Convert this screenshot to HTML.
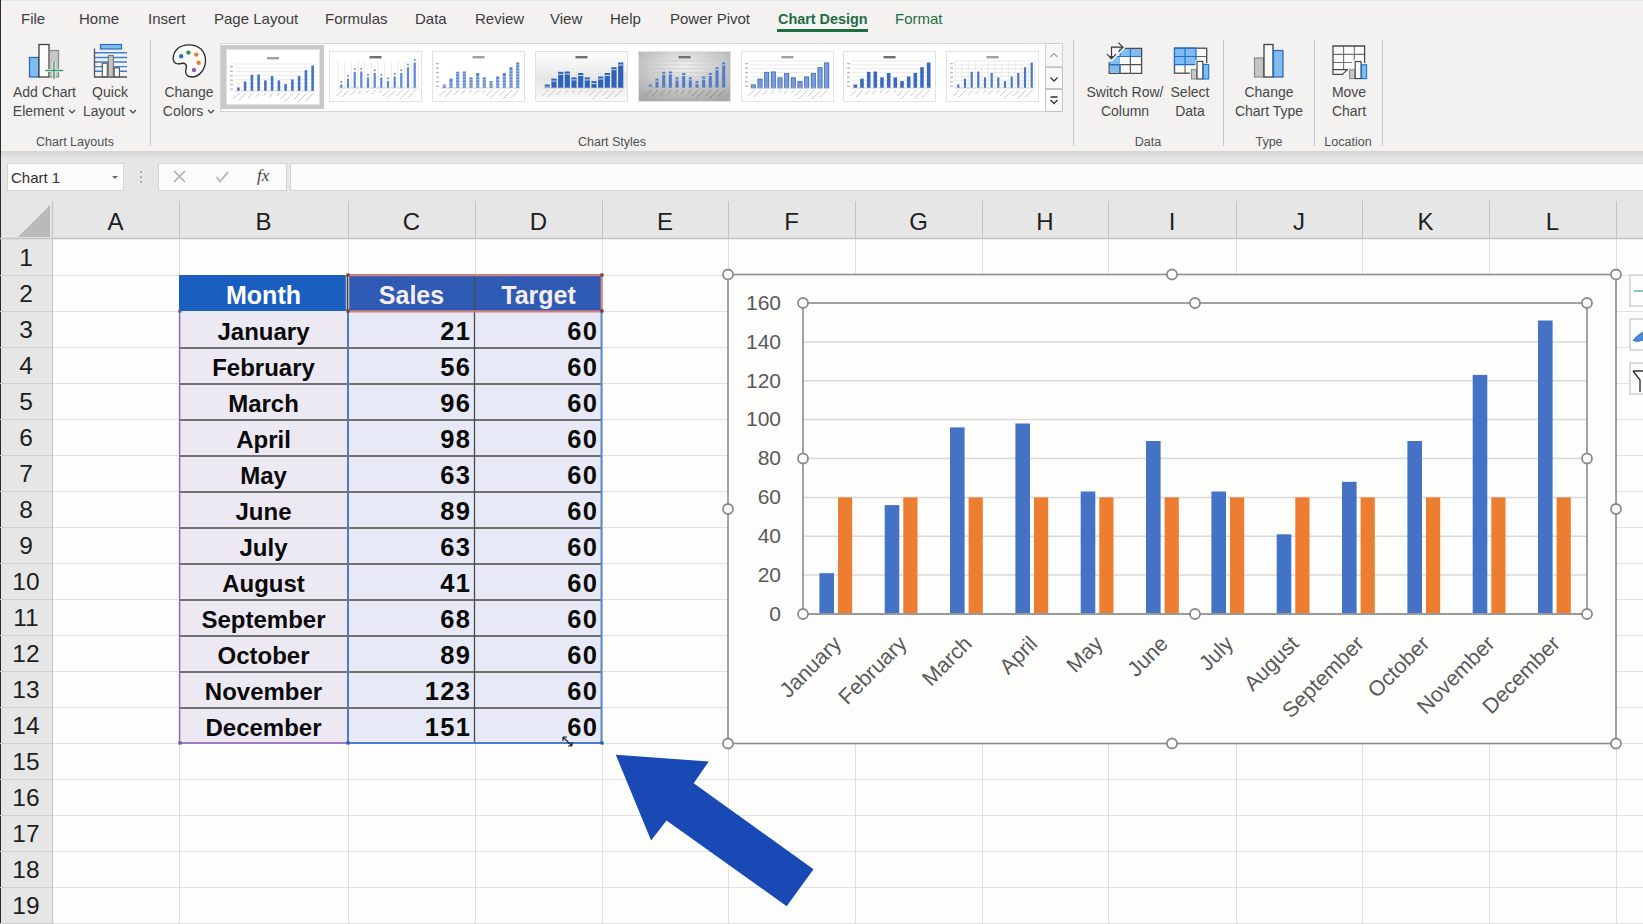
<!DOCTYPE html>
<html><head><meta charset="utf-8">
<style>
*{margin:0;padding:0;box-sizing:border-box}
html,body{width:1643px;height:924px;overflow:hidden;background:#fdfdfc;font-family:"Liberation Sans",sans-serif}
.abs{position:absolute}
.tab{position:absolute;top:10px;font-size:15px;color:#3c3c3c;white-space:nowrap;line-height:18px}
.btxt{position:absolute;font-size:14px;color:#474747;white-space:nowrap;line-height:19px;text-align:center}
.glbl{position:absolute;top:134px;font-size:12.5px;color:#505050;white-space:nowrap;line-height:17px;text-align:center}
.sep{position:absolute;top:40px;width:1px;height:106px;background:#c8c8c8}
.rh{position:absolute;left:0;width:52px;text-align:center;font-size:24.5px;color:#1e1e1e;line-height:38.2px}
.ch{position:absolute;top:201px;height:38px;text-align:center;font-size:24px;color:#1e1e1e;line-height:42px}
.cell{position:absolute;height:36px;line-height:41px;font-weight:bold;color:#0a0a0a;white-space:nowrap}
</style></head><body>

<div class="abs" style="left:0;top:0;width:1643px;height:151px;background:#f3f2f1"></div>
<div class="abs" style="left:0;top:0;width:1643px;height:1px;background:#dfe9e3"></div>
<div class="abs" style="left:0;top:151px;width:1643px;height:7px;background:linear-gradient(#d4d4d4,#e4e4e4)"></div>
<div class="tab" style="left:21px;color:#3c3c3c">File</div>
<div class="tab" style="left:79px;color:#3c3c3c">Home</div>
<div class="tab" style="left:148px;color:#3c3c3c">Insert</div>
<div class="tab" style="left:214px;color:#3c3c3c">Page Layout</div>
<div class="tab" style="left:325px;color:#3c3c3c">Formulas</div>
<div class="tab" style="left:415px;color:#3c3c3c">Data</div>
<div class="tab" style="left:475px;color:#3c3c3c">Review</div>
<div class="tab" style="left:550px;color:#3c3c3c">View</div>
<div class="tab" style="left:610px;color:#3c3c3c">Help</div>
<div class="tab" style="left:670px;color:#3c3c3c">Power Pivot</div>
<div class="tab" style="left:778px;color:#1e6e42;font-weight:bold;font-size:14.4px;top:10px">Chart Design</div>
<div class="tab" style="left:895px;color:#1e6e42">Format</div>
<div class="abs" style="left:777px;top:29px;width:91px;height:3px;background:#1e6e42"></div>
<div class="sep" style="left:150px"></div>
<div class="sep" style="left:1073px"></div>
<div class="sep" style="left:1223px"></div>
<div class="sep" style="left:1314px"></div>
<div class="sep" style="left:1382px"></div>
<div class="btxt" style="left:-15.5px;top:83px;width:120px">Add Chart</div>
<div class="btxt" style="left:-15.5px;top:102px;width:120px">Element<svg width="8" height="5" style="margin-left:4px;vertical-align:2px"><path d="M1 1 L4 4 L7 1" fill="none" stroke="#444" stroke-width="1.2"/></svg></div>
<div class="btxt" style="left:50.0px;top:83px;width:120px">Quick</div>
<div class="btxt" style="left:50.0px;top:102px;width:120px">Layout<svg width="8" height="5" style="margin-left:4px;vertical-align:2px"><path d="M1 1 L4 4 L7 1" fill="none" stroke="#444" stroke-width="1.2"/></svg></div>
<div class="btxt" style="left:129.0px;top:83px;width:120px">Change</div>
<div class="btxt" style="left:129.0px;top:102px;width:120px">Colors<svg width="8" height="5" style="margin-left:4px;vertical-align:2px"><path d="M1 1 L4 4 L7 1" fill="none" stroke="#444" stroke-width="1.2"/></svg></div>
<div class="btxt" style="left:1065.0px;top:83px;width:120px">Switch Row/</div>
<div class="btxt" style="left:1065.0px;top:102px;width:120px">Column</div>
<div class="btxt" style="left:1130.0px;top:83px;width:120px">Select</div>
<div class="btxt" style="left:1130.0px;top:102px;width:120px">Data</div>
<div class="btxt" style="left:1209.0px;top:83px;width:120px">Change</div>
<div class="btxt" style="left:1209.0px;top:102px;width:120px">Chart Type</div>
<div class="btxt" style="left:1289.0px;top:83px;width:120px">Move</div>
<div class="btxt" style="left:1289.0px;top:102px;width:120px">Chart</div>
<div class="glbl" style="left:5.0px;width:140px">Chart Layouts</div>
<div class="glbl" style="left:542.0px;width:140px">Chart Styles</div>
<div class="glbl" style="left:1078.0px;width:140px">Data</div>
<div class="glbl" style="left:1199.0px;width:140px">Type</div>
<div class="glbl" style="left:1278.0px;width:140px">Location</div>
<svg class="abs" style="left:0;top:0" width="1643" height="151">
<!-- add chart element -->
<rect x="29.5" y="57.5" width="9.5" height="19.5" fill="#80bdee" stroke="#2a6cc0" stroke-width="1.3"/>
<rect x="39" y="44.5" width="10" height="32.5" fill="#fbfbfb" stroke="#404040" stroke-width="1.3"/>
<rect x="49.5" y="50.5" width="9" height="26.5" fill="#c6c6c6" stroke="#8a8a8a" stroke-width="1.2"/>
<path d="M45.5 70.5 H63 M54 61.5 V79" stroke="#f3f2f1" stroke-width="3.2" fill="none"/><path d="M45.5 70.5 H63 M54 61.5 V79" stroke="#3d9a68" stroke-width="1.4" fill="none"/>
<!-- quick layout -->
<rect x="100.5" y="44.5" width="21" height="4.5" fill="#80bdee" stroke="#2a6cc0" stroke-width="1.2"/>
<g stroke="#3d7fd6" stroke-width="1.4">
<path d="M95 52.8 H127 M95 57.5 H127 M95 62 H127 M95 66.6 H127 M95 71.2 H127"/>
</g>
<path d="M94.5 48.5 V77 H127" fill="none" stroke="#505050" stroke-width="1.3"/>
<rect x="102.3" y="63.2" width="5" height="13.5" fill="#fbfbfb" stroke="#505050" stroke-width="1.1"/>
<rect x="108.3" y="55.6" width="5" height="21" fill="#c3c3c3" stroke="#777" stroke-width="1.1"/>
<rect x="114.2" y="67.8" width="5.2" height="9" fill="#fbfbfb" stroke="#505050" stroke-width="1.1"/>
<!-- palette -->
<path d="M189 44.8 C178 44.8 173.2 52 173.2 58.5 C173.2 63.5 177 64.5 181 63.5 C185 62.5 187.5 64.5 186 69 C184.5 73.5 187 77 191.5 77 C200 77 205.5 68.5 205.5 60.5 C205.5 51 198.5 44.8 189 44.8 Z" fill="#fbfbfb" stroke="#2b2b2b" stroke-width="1.3"/>
<circle cx="181.2" cy="56.2" r="2.2" fill="#2f6ed0"/>
<circle cx="188.4" cy="52.6" r="2.2" fill="#3e8e52"/>
<circle cx="196.3" cy="54.6" r="2.2" fill="#ea7a35"/>
<circle cx="198.6" cy="62.8" r="2.2" fill="#ea7a35"/>
<circle cx="194" cy="70" r="2.2" fill="#8060b8"/>
<!-- switch row/column -->
<rect x="1109.2" y="48.5" width="32.4" height="24.8" fill="#fbfbfb"/><path d="M1123.5 48.5 H1141.6 V73.3 H1109.2 V62" fill="none" stroke="#4a4a4a" stroke-width="1.3"/>
<rect x="1120" y="49.1" width="21" height="7.4" fill="#80bdee"/>
<rect x="1109.8" y="56.5" width="10.2" height="16.2" fill="#80bdee"/>
<path d="M1109.2 64.6 H1141.6 M1120 56.5 H1141.6 M1130.4 56.5 V73.3 M1120 64.6 V73.3" stroke="#505050" stroke-width="1.1" fill="none"/>
<path d="M1109.2 56.5 H1120 V48.5 M1109.2 64.6 H1120 V73.3 M1130.4 48.5 V56.5 M1120 56.5 H1141.6" stroke="#1f6fd0" stroke-width="1.1" fill="none"/>
<path d="M1124.5 47 L1110.5 61" stroke="#f3f2f1" stroke-width="2.5"/>
<path d="M1111.5 58.5 V47.2 H1122.8 M1118.4 42.6 L1123 47.2 L1118.4 51.8 M1107 54.2 L1111.5 58.7 L1116 54.2" stroke="#333" stroke-width="1.2" fill="none"/>
<!-- select data -->
<rect x="1174.5" y="48.2" width="32.2" height="25" fill="#fbfbfb" stroke="#4a4a4a" stroke-width="1.3"/>
<rect x="1175" y="48.7" width="21" height="15.9" fill="#80bdee"/>
<path d="M1196 56.5 H1206.7 M1185 64.6 V73.2" stroke="#606060" stroke-width="1.1" fill="none"/>
<path d="M1174.5 48.2 H1196 V64.6 H1174.5 Z M1174.5 56.5 H1196 M1185 48.2 V64.6" stroke="#1f6fd0" stroke-width="1.2" fill="none"/>
<path d="M1191 80 V69 H1196.5 V61 H1203 V64 H1209.5 V80 Z" fill="#f3f2f1" stroke="#f3f2f1" stroke-width="2.2"/>
<rect x="1191.5" y="69.6" width="5.2" height="9.4" fill="#c8c8c8" stroke="#888" stroke-width="1"/>
<rect x="1197" y="61.4" width="5.8" height="17.6" fill="#fbfbfb" stroke="#404040" stroke-width="1.1"/>
<rect x="1203.3" y="64.4" width="5.4" height="14.6" fill="#80bdee" stroke="#1f6fd0" stroke-width="1.1"/>
<!-- change chart type -->
<rect x="1254.5" y="58" width="9" height="19" fill="#c6c6c6" stroke="#8a8a8a" stroke-width="1.2"/>
<rect x="1264" y="44.5" width="9" height="32.5" fill="#fbfbfb" stroke="#404040" stroke-width="1.3"/>
<rect x="1273.5" y="50.5" width="9.5" height="26.5" fill="#80bdee" stroke="#2a6cc0" stroke-width="1.3"/>
<!-- move chart -->
<rect x="1333" y="46" width="31.6" height="28" fill="#fbfbfb"/>
<path d="M1343.6 46 V69.6 M1354.3 46 V62.5 M1333 54.4 H1364.6 M1333 62.5 H1352" stroke="#707070" stroke-width="1.1" fill="none"/>
<path d="M1349 69.6 H1333 V46 H1364.6 V63" fill="none" stroke="#4a4a4a" stroke-width="1.3"/>
<path d="M1333 69.6 H1347.5 L1342.3 74.4 H1333 Z" fill="#fbfbfb" stroke="#4a4a4a" stroke-width="1.2"/>
<path d="M1349 80 V69 H1354.6 V61 H1361.6 V64.2 H1367.5 V80 Z" fill="#f3f2f1" stroke="#f3f2f1" stroke-width="2"/>
<rect x="1349.6" y="69.8" width="5.2" height="8.8" fill="#c8c8c8" stroke="#888" stroke-width="1"/>
<rect x="1355.2" y="61.6" width="5.8" height="17" fill="#fbfbfb" stroke="#404040" stroke-width="1.1"/>
<rect x="1361.6" y="64.8" width="5" height="13.8" fill="#80bdee" stroke="#1f6fd0" stroke-width="1.1"/>
</svg>
<div class="abs" style="left:220px;top:43px;width:826px;height:69px;background:#ffffff;border:1px solid #d6d6d6"></div>
<div class="abs" style="left:221px;top:45px;width:103px;height:64px;background:#c9c9c9"></div>
<div class="abs" style="left:1045px;top:43px;width:18px;height:24px;background:#f7f7f7;border:1px solid #d0d0d0"></div>
<div class="abs" style="left:1045px;top:67px;width:18px;height:22px;background:#fafafa;border:1px solid #c4c4c4"></div>
<div class="abs" style="left:1045px;top:89px;width:18px;height:23px;background:#fafafa;border:1px solid #c4c4c4"></div>
<svg class="abs" style="left:1045px;top:43px" width="18" height="69">
<path d="M5.5 14 L9 10.5 L12.5 14" fill="none" stroke="#a0a0a0" stroke-width="1.1"/>
<path d="M5.5 34.5 L9 38 L12.5 34.5" fill="none" stroke="#333" stroke-width="1.3"/>
<path d="M5.5 54 H12.5 M5.5 57 L9 60.5 L12.5 57" fill="none" stroke="#333" stroke-width="1.3"/>
</svg>
<svg class="abs" style="left:226px;top:49px" width="94" height="56"><rect x="0.5" y="0.5" width="93" height="55" fill="#ffffff" stroke="#e2e2e2"/><rect x="41.0" y="8.0" width="12" height="2.4" fill="#a0a0a0"/><line x1="9" y1="15.0" x2="90" y2="15.0" stroke="#dcdcdc" stroke-width="0.6"/><line x1="9" y1="18.9" x2="90" y2="18.9" stroke="#dcdcdc" stroke-width="0.6"/><line x1="9" y1="22.7" x2="90" y2="22.7" stroke="#dcdcdc" stroke-width="0.6"/><line x1="9" y1="26.6" x2="90" y2="26.6" stroke="#dcdcdc" stroke-width="0.6"/><line x1="9" y1="30.4" x2="90" y2="30.4" stroke="#dcdcdc" stroke-width="0.6"/><line x1="9" y1="34.3" x2="90" y2="34.3" stroke="#dcdcdc" stroke-width="0.6"/><line x1="9" y1="38.1" x2="90" y2="38.1" stroke="#dcdcdc" stroke-width="0.6"/><rect x="4" y="17.0" width="3" height="1.3" fill="#b8b8b8"/><rect x="4" y="21.5" width="3" height="1.3" fill="#b8b8b8"/><rect x="4" y="26.0" width="3" height="1.3" fill="#b8b8b8"/><rect x="4" y="30.5" width="3" height="1.3" fill="#b8b8b8"/><rect x="4" y="35.0" width="3" height="1.3" fill="#b8b8b8"/><rect x="4" y="39.5" width="3" height="1.3" fill="#b8b8b8"/><rect x="11.1" y="38.5" width="2.6" height="3.5" fill="#4472c4"/><rect x="17.8" y="32.5" width="2.6" height="9.4" fill="#4472c4"/><rect x="24.6" y="25.8" width="2.6" height="16.2" fill="#4472c4"/><rect x="31.3" y="25.5" width="2.6" height="16.5" fill="#4472c4"/><rect x="38.1" y="31.4" width="2.6" height="10.6" fill="#4472c4"/><rect x="44.8" y="27.0" width="2.6" height="15.0" fill="#4472c4"/><rect x="51.6" y="31.4" width="2.6" height="10.6" fill="#4472c4"/><rect x="58.3" y="35.1" width="2.6" height="6.9" fill="#4472c4"/><rect x="65.1" y="30.5" width="2.6" height="11.5" fill="#4472c4"/><rect x="71.8" y="27.0" width="2.6" height="15.0" fill="#4472c4"/><rect x="78.6" y="21.2" width="2.6" height="20.8" fill="#4472c4"/><rect x="85.3" y="16.5" width="2.6" height="25.5" fill="#4472c4"/><line x1="9" y1="42" x2="90" y2="42" stroke="#c0c0c0" stroke-width="0.7"/><line x1="13.4" y1="44" x2="7.4" y2="50" stroke="#c0c0c0" stroke-width="0.9"/><line x1="20.1" y1="44" x2="13.1" y2="51" stroke="#c0c0c0" stroke-width="0.9"/><line x1="26.9" y1="44" x2="21.9" y2="49" stroke="#c0c0c0" stroke-width="0.9"/><line x1="33.6" y1="44" x2="29.6" y2="48" stroke="#c0c0c0" stroke-width="0.9"/><line x1="40.4" y1="44" x2="37.4" y2="47" stroke="#c0c0c0" stroke-width="0.9"/><line x1="47.1" y1="44" x2="43.1" y2="48" stroke="#c0c0c0" stroke-width="0.9"/><line x1="53.9" y1="44" x2="50.9" y2="47" stroke="#c0c0c0" stroke-width="0.9"/><line x1="60.6" y1="44" x2="54.6" y2="50" stroke="#c0c0c0" stroke-width="0.9"/><line x1="67.4" y1="44" x2="58.4" y2="53" stroke="#c0c0c0" stroke-width="0.9"/><line x1="74.1" y1="44" x2="68.1" y2="50" stroke="#c0c0c0" stroke-width="0.9"/><line x1="80.9" y1="44" x2="71.9" y2="53" stroke="#c0c0c0" stroke-width="0.9"/><line x1="87.6" y1="44" x2="79.6" y2="52" stroke="#c0c0c0" stroke-width="0.9"/></svg>
<svg class="abs" style="left:329px;top:51px" width="93" height="51"><rect x="0.5" y="0.5" width="92" height="50" fill="#ffffff" stroke="#e2e2e2"/><rect x="40.5" y="5.0" width="12" height="2.4" fill="#707070"/><line x1="9.0" y1="10" x2="9.0" y2="37" stroke="#dddddd" stroke-width="0.6"/><line x1="15.7" y1="10" x2="15.7" y2="37" stroke="#dddddd" stroke-width="0.6"/><line x1="22.3" y1="10" x2="22.3" y2="37" stroke="#dddddd" stroke-width="0.6"/><line x1="29.0" y1="10" x2="29.0" y2="37" stroke="#dddddd" stroke-width="0.6"/><line x1="35.7" y1="10" x2="35.7" y2="37" stroke="#dddddd" stroke-width="0.6"/><line x1="42.3" y1="10" x2="42.3" y2="37" stroke="#dddddd" stroke-width="0.6"/><line x1="49.0" y1="10" x2="49.0" y2="37" stroke="#dddddd" stroke-width="0.6"/><line x1="55.7" y1="10" x2="55.7" y2="37" stroke="#dddddd" stroke-width="0.6"/><line x1="62.3" y1="10" x2="62.3" y2="37" stroke="#dddddd" stroke-width="0.6"/><line x1="69.0" y1="10" x2="69.0" y2="37" stroke="#dddddd" stroke-width="0.6"/><line x1="75.7" y1="10" x2="75.7" y2="37" stroke="#dddddd" stroke-width="0.6"/><line x1="82.3" y1="10" x2="82.3" y2="37" stroke="#dddddd" stroke-width="0.6"/><line x1="89.0" y1="10" x2="89.0" y2="37" stroke="#dddddd" stroke-width="0.6"/><rect x="11.2" y="33.5" width="2.2" height="3.5" fill="#5b87d4"/><rect x="11.5" y="30.0" width="1.6" height="1.6" fill="#777"/><rect x="17.9" y="27.6" width="2.2" height="9.4" fill="#5b87d4"/><rect x="18.2" y="24.1" width="1.6" height="1.6" fill="#777"/><rect x="24.6" y="20.8" width="2.2" height="16.2" fill="#5b87d4"/><rect x="24.9" y="17.3" width="1.6" height="1.6" fill="#777"/><rect x="31.2" y="20.5" width="2.2" height="16.5" fill="#5b87d4"/><rect x="31.5" y="17.0" width="1.6" height="1.6" fill="#777"/><rect x="37.9" y="26.4" width="2.2" height="10.6" fill="#5b87d4"/><rect x="38.2" y="22.9" width="1.6" height="1.6" fill="#777"/><rect x="44.6" y="22.0" width="2.2" height="15.0" fill="#5b87d4"/><rect x="44.9" y="18.5" width="1.6" height="1.6" fill="#777"/><rect x="51.2" y="26.4" width="2.2" height="10.6" fill="#5b87d4"/><rect x="51.5" y="22.9" width="1.6" height="1.6" fill="#777"/><rect x="57.9" y="30.1" width="2.2" height="6.9" fill="#5b87d4"/><rect x="58.2" y="26.6" width="1.6" height="1.6" fill="#777"/><rect x="64.6" y="25.5" width="2.2" height="11.5" fill="#5b87d4"/><rect x="64.9" y="22.0" width="1.6" height="1.6" fill="#777"/><rect x="71.2" y="22.0" width="2.2" height="15.0" fill="#5b87d4"/><rect x="71.5" y="18.5" width="1.6" height="1.6" fill="#777"/><rect x="77.9" y="16.2" width="2.2" height="20.8" fill="#5b87d4"/><rect x="78.2" y="12.7" width="1.6" height="1.6" fill="#777"/><rect x="84.6" y="11.5" width="2.2" height="25.5" fill="#5b87d4"/><rect x="84.9" y="8.0" width="1.6" height="1.6" fill="#777"/><line x1="9" y1="37" x2="89" y2="37" stroke="#c0c0c0" stroke-width="0.7"/><line x1="13.3" y1="39" x2="7.3" y2="45" stroke="#c0c0c0" stroke-width="0.9"/><line x1="20.0" y1="39" x2="13.0" y2="46" stroke="#c0c0c0" stroke-width="0.9"/><line x1="26.7" y1="39" x2="21.7" y2="44" stroke="#c0c0c0" stroke-width="0.9"/><line x1="33.3" y1="39" x2="29.3" y2="43" stroke="#c0c0c0" stroke-width="0.9"/><line x1="40.0" y1="39" x2="37.0" y2="42" stroke="#c0c0c0" stroke-width="0.9"/><line x1="46.7" y1="39" x2="42.7" y2="43" stroke="#c0c0c0" stroke-width="0.9"/><line x1="53.3" y1="39" x2="50.3" y2="42" stroke="#c0c0c0" stroke-width="0.9"/><line x1="60.0" y1="39" x2="54.0" y2="45" stroke="#c0c0c0" stroke-width="0.9"/><line x1="66.7" y1="39" x2="57.7" y2="48" stroke="#c0c0c0" stroke-width="0.9"/><line x1="73.3" y1="39" x2="67.3" y2="45" stroke="#c0c0c0" stroke-width="0.9"/><line x1="80.0" y1="39" x2="71.0" y2="48" stroke="#c0c0c0" stroke-width="0.9"/><line x1="86.7" y1="39" x2="78.7" y2="47" stroke="#c0c0c0" stroke-width="0.9"/></svg>
<svg class="abs" style="left:432px;top:51px" width="93" height="51"><rect x="0.5" y="0.5" width="92" height="50" fill="#ffffff" stroke="#e2e2e2"/><rect x="40.5" y="5.0" width="12" height="2.4" fill="#a0a0a0"/><rect x="4" y="12.0" width="3" height="1.3" fill="#b8b8b8"/><rect x="4" y="16.5" width="3" height="1.3" fill="#b8b8b8"/><rect x="4" y="21.0" width="3" height="1.3" fill="#b8b8b8"/><rect x="4" y="25.5" width="3" height="1.3" fill="#b8b8b8"/><rect x="4" y="30.0" width="3" height="1.3" fill="#b8b8b8"/><rect x="4" y="34.5" width="3" height="1.3" fill="#b8b8b8"/><rect x="10.7" y="33.5" width="3.2" height="3.5" fill="#5a86d0"/><rect x="10.7" y="34.5" width="3.2" height="0.8" fill="#ffffff" opacity="0.7"/><rect x="17.4" y="27.6" width="3.2" height="9.4" fill="#5a86d0"/><rect x="17.4" y="34.5" width="3.2" height="0.8" fill="#ffffff" opacity="0.7"/><rect x="17.4" y="31.5" width="3.2" height="0.8" fill="#ffffff" opacity="0.7"/><rect x="24.1" y="20.8" width="3.2" height="16.2" fill="#5a86d0"/><rect x="24.1" y="34.5" width="3.2" height="0.8" fill="#ffffff" opacity="0.7"/><rect x="24.1" y="31.5" width="3.2" height="0.8" fill="#ffffff" opacity="0.7"/><rect x="24.1" y="28.5" width="3.2" height="0.8" fill="#ffffff" opacity="0.7"/><rect x="24.1" y="25.5" width="3.2" height="0.8" fill="#ffffff" opacity="0.7"/><rect x="24.1" y="22.5" width="3.2" height="0.8" fill="#ffffff" opacity="0.7"/><rect x="30.7" y="20.5" width="3.2" height="16.5" fill="#5a86d0"/><rect x="30.7" y="34.5" width="3.2" height="0.8" fill="#ffffff" opacity="0.7"/><rect x="30.7" y="31.5" width="3.2" height="0.8" fill="#ffffff" opacity="0.7"/><rect x="30.7" y="28.5" width="3.2" height="0.8" fill="#ffffff" opacity="0.7"/><rect x="30.7" y="25.5" width="3.2" height="0.8" fill="#ffffff" opacity="0.7"/><rect x="30.7" y="22.5" width="3.2" height="0.8" fill="#ffffff" opacity="0.7"/><rect x="37.4" y="26.4" width="3.2" height="10.6" fill="#5a86d0"/><rect x="37.4" y="34.5" width="3.2" height="0.8" fill="#ffffff" opacity="0.7"/><rect x="37.4" y="31.5" width="3.2" height="0.8" fill="#ffffff" opacity="0.7"/><rect x="37.4" y="28.5" width="3.2" height="0.8" fill="#ffffff" opacity="0.7"/><rect x="44.1" y="22.0" width="3.2" height="15.0" fill="#5a86d0"/><rect x="44.1" y="34.5" width="3.2" height="0.8" fill="#ffffff" opacity="0.7"/><rect x="44.1" y="31.5" width="3.2" height="0.8" fill="#ffffff" opacity="0.7"/><rect x="44.1" y="28.5" width="3.2" height="0.8" fill="#ffffff" opacity="0.7"/><rect x="44.1" y="25.5" width="3.2" height="0.8" fill="#ffffff" opacity="0.7"/><rect x="50.7" y="26.4" width="3.2" height="10.6" fill="#5a86d0"/><rect x="50.7" y="34.5" width="3.2" height="0.8" fill="#ffffff" opacity="0.7"/><rect x="50.7" y="31.5" width="3.2" height="0.8" fill="#ffffff" opacity="0.7"/><rect x="50.7" y="28.5" width="3.2" height="0.8" fill="#ffffff" opacity="0.7"/><rect x="57.4" y="30.1" width="3.2" height="6.9" fill="#5a86d0"/><rect x="57.4" y="34.5" width="3.2" height="0.8" fill="#ffffff" opacity="0.7"/><rect x="57.4" y="31.5" width="3.2" height="0.8" fill="#ffffff" opacity="0.7"/><rect x="64.1" y="25.5" width="3.2" height="11.5" fill="#5a86d0"/><rect x="64.1" y="34.5" width="3.2" height="0.8" fill="#ffffff" opacity="0.7"/><rect x="64.1" y="31.5" width="3.2" height="0.8" fill="#ffffff" opacity="0.7"/><rect x="64.1" y="28.5" width="3.2" height="0.8" fill="#ffffff" opacity="0.7"/><rect x="70.7" y="22.0" width="3.2" height="15.0" fill="#5a86d0"/><rect x="70.7" y="34.5" width="3.2" height="0.8" fill="#ffffff" opacity="0.7"/><rect x="70.7" y="31.5" width="3.2" height="0.8" fill="#ffffff" opacity="0.7"/><rect x="70.7" y="28.5" width="3.2" height="0.8" fill="#ffffff" opacity="0.7"/><rect x="70.7" y="25.5" width="3.2" height="0.8" fill="#ffffff" opacity="0.7"/><rect x="77.4" y="16.2" width="3.2" height="20.8" fill="#5a86d0"/><rect x="77.4" y="34.5" width="3.2" height="0.8" fill="#ffffff" opacity="0.7"/><rect x="77.4" y="31.5" width="3.2" height="0.8" fill="#ffffff" opacity="0.7"/><rect x="77.4" y="28.5" width="3.2" height="0.8" fill="#ffffff" opacity="0.7"/><rect x="77.4" y="25.5" width="3.2" height="0.8" fill="#ffffff" opacity="0.7"/><rect x="77.4" y="22.5" width="3.2" height="0.8" fill="#ffffff" opacity="0.7"/><rect x="77.4" y="19.5" width="3.2" height="0.8" fill="#ffffff" opacity="0.7"/><rect x="84.1" y="11.5" width="3.2" height="25.5" fill="#5a86d0"/><rect x="84.1" y="34.5" width="3.2" height="0.8" fill="#ffffff" opacity="0.7"/><rect x="84.1" y="31.5" width="3.2" height="0.8" fill="#ffffff" opacity="0.7"/><rect x="84.1" y="28.5" width="3.2" height="0.8" fill="#ffffff" opacity="0.7"/><rect x="84.1" y="25.5" width="3.2" height="0.8" fill="#ffffff" opacity="0.7"/><rect x="84.1" y="22.5" width="3.2" height="0.8" fill="#ffffff" opacity="0.7"/><rect x="84.1" y="19.5" width="3.2" height="0.8" fill="#ffffff" opacity="0.7"/><rect x="84.1" y="16.5" width="3.2" height="0.8" fill="#ffffff" opacity="0.7"/><rect x="84.1" y="13.5" width="3.2" height="0.8" fill="#ffffff" opacity="0.7"/><line x1="9" y1="37" x2="89" y2="37" stroke="#c0c0c0" stroke-width="0.7"/><line x1="13.3" y1="39" x2="7.3" y2="45" stroke="#c0c0c0" stroke-width="0.9"/><line x1="20.0" y1="39" x2="13.0" y2="46" stroke="#c0c0c0" stroke-width="0.9"/><line x1="26.7" y1="39" x2="21.7" y2="44" stroke="#c0c0c0" stroke-width="0.9"/><line x1="33.3" y1="39" x2="29.3" y2="43" stroke="#c0c0c0" stroke-width="0.9"/><line x1="40.0" y1="39" x2="37.0" y2="42" stroke="#c0c0c0" stroke-width="0.9"/><line x1="46.7" y1="39" x2="42.7" y2="43" stroke="#c0c0c0" stroke-width="0.9"/><line x1="53.3" y1="39" x2="50.3" y2="42" stroke="#c0c0c0" stroke-width="0.9"/><line x1="60.0" y1="39" x2="54.0" y2="45" stroke="#c0c0c0" stroke-width="0.9"/><line x1="66.7" y1="39" x2="57.7" y2="48" stroke="#c0c0c0" stroke-width="0.9"/><line x1="73.3" y1="39" x2="67.3" y2="45" stroke="#c0c0c0" stroke-width="0.9"/><line x1="80.0" y1="39" x2="71.0" y2="48" stroke="#c0c0c0" stroke-width="0.9"/><line x1="86.7" y1="39" x2="78.7" y2="47" stroke="#c0c0c0" stroke-width="0.9"/></svg>
<svg class="abs" style="left:535px;top:51px" width="93" height="51"><defs><linearGradient id="g4" x1="0" y1="0" x2="0" y2="1"><stop offset="0" stop-color="#ffffff"/><stop offset="0.55" stop-color="#e6e6e6"/><stop offset="1" stop-color="#fafafa"/></linearGradient></defs><rect x="0.5" y="0.5" width="92" height="50" fill="url(#g4)" stroke="#e2e2e2"/><rect x="40.5" y="5.0" width="12" height="2.4" fill="#707070"/><rect x="9.7" y="33.5" width="5.2" height="3.5" fill="#2f62bb"/><rect x="9.7" y="35.5" width="5.2" height="1" fill="#ffffff" opacity="0.75"/><rect x="16.4" y="27.6" width="5.2" height="9.4" fill="#2f62bb"/><rect x="16.4" y="29.6" width="5.2" height="1" fill="#ffffff" opacity="0.75"/><rect x="23.1" y="20.8" width="5.2" height="16.2" fill="#2f62bb"/><rect x="23.1" y="22.8" width="5.2" height="1" fill="#ffffff" opacity="0.75"/><rect x="29.7" y="20.5" width="5.2" height="16.5" fill="#2f62bb"/><rect x="29.7" y="22.5" width="5.2" height="1" fill="#ffffff" opacity="0.75"/><rect x="36.4" y="26.4" width="5.2" height="10.6" fill="#2f62bb"/><rect x="36.4" y="28.4" width="5.2" height="1" fill="#ffffff" opacity="0.75"/><rect x="43.1" y="22.0" width="5.2" height="15.0" fill="#2f62bb"/><rect x="43.1" y="24.0" width="5.2" height="1" fill="#ffffff" opacity="0.75"/><rect x="49.7" y="26.4" width="5.2" height="10.6" fill="#2f62bb"/><rect x="49.7" y="28.4" width="5.2" height="1" fill="#ffffff" opacity="0.75"/><rect x="56.4" y="30.1" width="5.2" height="6.9" fill="#2f62bb"/><rect x="56.4" y="32.1" width="5.2" height="1" fill="#ffffff" opacity="0.75"/><rect x="63.1" y="25.5" width="5.2" height="11.5" fill="#2f62bb"/><rect x="63.1" y="27.5" width="5.2" height="1" fill="#ffffff" opacity="0.75"/><rect x="69.7" y="22.0" width="5.2" height="15.0" fill="#2f62bb"/><rect x="69.7" y="24.0" width="5.2" height="1" fill="#ffffff" opacity="0.75"/><rect x="76.4" y="16.2" width="5.2" height="20.8" fill="#2f62bb"/><rect x="76.4" y="18.2" width="5.2" height="1" fill="#ffffff" opacity="0.75"/><rect x="83.1" y="11.5" width="5.2" height="25.5" fill="#2f62bb"/><rect x="83.1" y="13.5" width="5.2" height="1" fill="#ffffff" opacity="0.75"/><line x1="9" y1="37" x2="89" y2="37" stroke="#c0c0c0" stroke-width="0.7"/><line x1="13.3" y1="39" x2="7.3" y2="45" stroke="#c0c0c0" stroke-width="0.9"/><line x1="20.0" y1="39" x2="13.0" y2="46" stroke="#c0c0c0" stroke-width="0.9"/><line x1="26.7" y1="39" x2="21.7" y2="44" stroke="#c0c0c0" stroke-width="0.9"/><line x1="33.3" y1="39" x2="29.3" y2="43" stroke="#c0c0c0" stroke-width="0.9"/><line x1="40.0" y1="39" x2="37.0" y2="42" stroke="#c0c0c0" stroke-width="0.9"/><line x1="46.7" y1="39" x2="42.7" y2="43" stroke="#c0c0c0" stroke-width="0.9"/><line x1="53.3" y1="39" x2="50.3" y2="42" stroke="#c0c0c0" stroke-width="0.9"/><line x1="60.0" y1="39" x2="54.0" y2="45" stroke="#c0c0c0" stroke-width="0.9"/><line x1="66.7" y1="39" x2="57.7" y2="48" stroke="#c0c0c0" stroke-width="0.9"/><line x1="73.3" y1="39" x2="67.3" y2="45" stroke="#c0c0c0" stroke-width="0.9"/><line x1="80.0" y1="39" x2="71.0" y2="48" stroke="#c0c0c0" stroke-width="0.9"/><line x1="86.7" y1="39" x2="78.7" y2="47" stroke="#c0c0c0" stroke-width="0.9"/></svg>
<svg class="abs" style="left:638px;top:51px" width="93" height="51"><defs><radialGradient id="g5" cx="0.5" cy="0.3" r="0.75"><stop offset="0" stop-color="#f0f0f0"/><stop offset="1" stop-color="#a9a9a9"/></radialGradient></defs><rect x="0.5" y="0.5" width="92" height="50" fill="url(#g5)" stroke="#e2e2e2"/><rect x="40.5" y="5.0" width="12" height="2.4" fill="#707070"/><line x1="9" y1="10.0" x2="89" y2="10.0" stroke="#c8c8c8" stroke-width="0.6"/><line x1="9" y1="13.9" x2="89" y2="13.9" stroke="#c8c8c8" stroke-width="0.6"/><line x1="9" y1="17.7" x2="89" y2="17.7" stroke="#c8c8c8" stroke-width="0.6"/><line x1="9" y1="21.6" x2="89" y2="21.6" stroke="#c8c8c8" stroke-width="0.6"/><line x1="9" y1="25.4" x2="89" y2="25.4" stroke="#c8c8c8" stroke-width="0.6"/><line x1="9" y1="29.3" x2="89" y2="29.3" stroke="#c8c8c8" stroke-width="0.6"/><line x1="9" y1="33.1" x2="89" y2="33.1" stroke="#c8c8c8" stroke-width="0.6"/><rect x="10.8" y="33.5" width="3.0" height="3.5" fill="#4f7cc8"/><rect x="10.8" y="35.5" width="3.0" height="1" fill="#ffffff" opacity="0.75"/><rect x="17.5" y="27.6" width="3.0" height="9.4" fill="#4f7cc8"/><rect x="17.5" y="29.6" width="3.0" height="1" fill="#ffffff" opacity="0.75"/><rect x="24.2" y="20.8" width="3.0" height="16.2" fill="#4f7cc8"/><rect x="24.2" y="22.8" width="3.0" height="1" fill="#ffffff" opacity="0.75"/><rect x="30.8" y="20.5" width="3.0" height="16.5" fill="#4f7cc8"/><rect x="30.8" y="22.5" width="3.0" height="1" fill="#ffffff" opacity="0.75"/><rect x="37.5" y="26.4" width="3.0" height="10.6" fill="#4f7cc8"/><rect x="37.5" y="28.4" width="3.0" height="1" fill="#ffffff" opacity="0.75"/><rect x="44.2" y="22.0" width="3.0" height="15.0" fill="#4f7cc8"/><rect x="44.2" y="24.0" width="3.0" height="1" fill="#ffffff" opacity="0.75"/><rect x="50.8" y="26.4" width="3.0" height="10.6" fill="#4f7cc8"/><rect x="50.8" y="28.4" width="3.0" height="1" fill="#ffffff" opacity="0.75"/><rect x="57.5" y="30.1" width="3.0" height="6.9" fill="#4f7cc8"/><rect x="57.5" y="32.1" width="3.0" height="1" fill="#ffffff" opacity="0.75"/><rect x="64.2" y="25.5" width="3.0" height="11.5" fill="#4f7cc8"/><rect x="64.2" y="27.5" width="3.0" height="1" fill="#ffffff" opacity="0.75"/><rect x="70.8" y="22.0" width="3.0" height="15.0" fill="#4f7cc8"/><rect x="70.8" y="24.0" width="3.0" height="1" fill="#ffffff" opacity="0.75"/><rect x="77.5" y="16.2" width="3.0" height="20.8" fill="#4f7cc8"/><rect x="77.5" y="18.2" width="3.0" height="1" fill="#ffffff" opacity="0.75"/><rect x="84.2" y="11.5" width="3.0" height="25.5" fill="#4f7cc8"/><rect x="84.2" y="13.5" width="3.0" height="1" fill="#ffffff" opacity="0.75"/><line x1="9" y1="37" x2="89" y2="37" stroke="#c0c0c0" stroke-width="0.7"/><line x1="13.3" y1="39" x2="7.3" y2="45" stroke="#8a8a8a" stroke-width="0.9"/><line x1="20.0" y1="39" x2="13.0" y2="46" stroke="#8a8a8a" stroke-width="0.9"/><line x1="26.7" y1="39" x2="21.7" y2="44" stroke="#8a8a8a" stroke-width="0.9"/><line x1="33.3" y1="39" x2="29.3" y2="43" stroke="#8a8a8a" stroke-width="0.9"/><line x1="40.0" y1="39" x2="37.0" y2="42" stroke="#8a8a8a" stroke-width="0.9"/><line x1="46.7" y1="39" x2="42.7" y2="43" stroke="#8a8a8a" stroke-width="0.9"/><line x1="53.3" y1="39" x2="50.3" y2="42" stroke="#8a8a8a" stroke-width="0.9"/><line x1="60.0" y1="39" x2="54.0" y2="45" stroke="#8a8a8a" stroke-width="0.9"/><line x1="66.7" y1="39" x2="57.7" y2="48" stroke="#8a8a8a" stroke-width="0.9"/><line x1="73.3" y1="39" x2="67.3" y2="45" stroke="#8a8a8a" stroke-width="0.9"/><line x1="80.0" y1="39" x2="71.0" y2="48" stroke="#8a8a8a" stroke-width="0.9"/><line x1="86.7" y1="39" x2="78.7" y2="47" stroke="#8a8a8a" stroke-width="0.9"/></svg>
<svg class="abs" style="left:741px;top:51px" width="93" height="51"><rect x="0.5" y="0.5" width="92" height="50" fill="#ffffff" stroke="#e2e2e2"/><rect x="40.5" y="5.0" width="12" height="2.4" fill="#a0a0a0"/><line x1="9" y1="10.0" x2="89" y2="10.0" stroke="#dcdcdc" stroke-width="0.6"/><line x1="9" y1="13.9" x2="89" y2="13.9" stroke="#dcdcdc" stroke-width="0.6"/><line x1="9" y1="17.7" x2="89" y2="17.7" stroke="#dcdcdc" stroke-width="0.6"/><line x1="9" y1="21.6" x2="89" y2="21.6" stroke="#dcdcdc" stroke-width="0.6"/><line x1="9" y1="25.4" x2="89" y2="25.4" stroke="#dcdcdc" stroke-width="0.6"/><line x1="9" y1="29.3" x2="89" y2="29.3" stroke="#dcdcdc" stroke-width="0.6"/><line x1="9" y1="33.1" x2="89" y2="33.1" stroke="#dcdcdc" stroke-width="0.6"/><rect x="4" y="12.0" width="3" height="1.3" fill="#b8b8b8"/><rect x="4" y="16.5" width="3" height="1.3" fill="#b8b8b8"/><rect x="4" y="21.0" width="3" height="1.3" fill="#b8b8b8"/><rect x="4" y="25.5" width="3" height="1.3" fill="#b8b8b8"/><rect x="4" y="30.0" width="3" height="1.3" fill="#b8b8b8"/><rect x="4" y="34.5" width="3" height="1.3" fill="#b8b8b8"/><rect x="9.8" y="33.5" width="5.0" height="3.5" fill="#7a9ddc"/><rect x="10.3" y="34.0" width="4.0" height="3.0" fill="none" stroke="#3a64b0" stroke-width="0.6"/><rect x="16.5" y="27.6" width="5.0" height="9.4" fill="#7a9ddc"/><rect x="17.0" y="28.1" width="4.0" height="8.9" fill="none" stroke="#3a64b0" stroke-width="0.6"/><rect x="23.2" y="20.8" width="5.0" height="16.2" fill="#7a9ddc"/><rect x="23.7" y="21.3" width="4.0" height="15.7" fill="none" stroke="#3a64b0" stroke-width="0.6"/><rect x="29.8" y="20.5" width="5.0" height="16.5" fill="#7a9ddc"/><rect x="30.3" y="21.0" width="4.0" height="16.0" fill="none" stroke="#3a64b0" stroke-width="0.6"/><rect x="36.5" y="26.4" width="5.0" height="10.6" fill="#7a9ddc"/><rect x="37.0" y="26.9" width="4.0" height="10.1" fill="none" stroke="#3a64b0" stroke-width="0.6"/><rect x="43.2" y="22.0" width="5.0" height="15.0" fill="#7a9ddc"/><rect x="43.7" y="22.5" width="4.0" height="14.5" fill="none" stroke="#3a64b0" stroke-width="0.6"/><rect x="49.8" y="26.4" width="5.0" height="10.6" fill="#7a9ddc"/><rect x="50.3" y="26.9" width="4.0" height="10.1" fill="none" stroke="#3a64b0" stroke-width="0.6"/><rect x="56.5" y="30.1" width="5.0" height="6.9" fill="#7a9ddc"/><rect x="57.0" y="30.6" width="4.0" height="6.4" fill="none" stroke="#3a64b0" stroke-width="0.6"/><rect x="63.2" y="25.5" width="5.0" height="11.5" fill="#7a9ddc"/><rect x="63.7" y="26.0" width="4.0" height="11.0" fill="none" stroke="#3a64b0" stroke-width="0.6"/><rect x="69.8" y="22.0" width="5.0" height="15.0" fill="#7a9ddc"/><rect x="70.3" y="22.5" width="4.0" height="14.5" fill="none" stroke="#3a64b0" stroke-width="0.6"/><rect x="76.5" y="16.2" width="5.0" height="20.8" fill="#7a9ddc"/><rect x="77.0" y="16.7" width="4.0" height="20.3" fill="none" stroke="#3a64b0" stroke-width="0.6"/><rect x="83.2" y="11.5" width="5.0" height="25.5" fill="#7a9ddc"/><rect x="83.7" y="12.0" width="4.0" height="25.0" fill="none" stroke="#3a64b0" stroke-width="0.6"/><line x1="9" y1="37" x2="89" y2="37" stroke="#c0c0c0" stroke-width="0.7"/><line x1="13.3" y1="39" x2="7.3" y2="45" stroke="#c0c0c0" stroke-width="0.9"/><line x1="20.0" y1="39" x2="13.0" y2="46" stroke="#c0c0c0" stroke-width="0.9"/><line x1="26.7" y1="39" x2="21.7" y2="44" stroke="#c0c0c0" stroke-width="0.9"/><line x1="33.3" y1="39" x2="29.3" y2="43" stroke="#c0c0c0" stroke-width="0.9"/><line x1="40.0" y1="39" x2="37.0" y2="42" stroke="#c0c0c0" stroke-width="0.9"/><line x1="46.7" y1="39" x2="42.7" y2="43" stroke="#c0c0c0" stroke-width="0.9"/><line x1="53.3" y1="39" x2="50.3" y2="42" stroke="#c0c0c0" stroke-width="0.9"/><line x1="60.0" y1="39" x2="54.0" y2="45" stroke="#c0c0c0" stroke-width="0.9"/><line x1="66.7" y1="39" x2="57.7" y2="48" stroke="#c0c0c0" stroke-width="0.9"/><line x1="73.3" y1="39" x2="67.3" y2="45" stroke="#c0c0c0" stroke-width="0.9"/><line x1="80.0" y1="39" x2="71.0" y2="48" stroke="#c0c0c0" stroke-width="0.9"/><line x1="86.7" y1="39" x2="78.7" y2="47" stroke="#c0c0c0" stroke-width="0.9"/></svg>
<svg class="abs" style="left:843px;top:51px" width="93" height="51"><rect x="0.5" y="0.5" width="92" height="50" fill="#ffffff" stroke="#e2e2e2"/><rect x="40.5" y="5.0" width="12" height="2.4" fill="#707070"/><line x1="9" y1="10.0" x2="89" y2="10.0" stroke="#dcdcdc" stroke-width="0.6"/><line x1="9" y1="13.9" x2="89" y2="13.9" stroke="#dcdcdc" stroke-width="0.6"/><line x1="9" y1="17.7" x2="89" y2="17.7" stroke="#dcdcdc" stroke-width="0.6"/><line x1="9" y1="21.6" x2="89" y2="21.6" stroke="#dcdcdc" stroke-width="0.6"/><line x1="9" y1="25.4" x2="89" y2="25.4" stroke="#dcdcdc" stroke-width="0.6"/><line x1="9" y1="29.3" x2="89" y2="29.3" stroke="#dcdcdc" stroke-width="0.6"/><line x1="9" y1="33.1" x2="89" y2="33.1" stroke="#dcdcdc" stroke-width="0.6"/><rect x="4" y="12.0" width="3" height="1.3" fill="#b8b8b8"/><rect x="4" y="16.5" width="3" height="1.3" fill="#b8b8b8"/><rect x="4" y="21.0" width="3" height="1.3" fill="#b8b8b8"/><rect x="4" y="25.5" width="3" height="1.3" fill="#b8b8b8"/><rect x="4" y="30.0" width="3" height="1.3" fill="#b8b8b8"/><rect x="4" y="34.5" width="3" height="1.3" fill="#b8b8b8"/><rect x="10.5" y="33.5" width="3.6" height="3.5" fill="#3a6ac0"/><rect x="17.2" y="27.6" width="3.6" height="9.4" fill="#3a6ac0"/><rect x="23.9" y="20.8" width="3.6" height="16.2" fill="#3a6ac0"/><rect x="30.5" y="20.5" width="3.6" height="16.5" fill="#3a6ac0"/><rect x="37.2" y="26.4" width="3.6" height="10.6" fill="#3a6ac0"/><rect x="43.9" y="22.0" width="3.6" height="15.0" fill="#3a6ac0"/><rect x="50.5" y="26.4" width="3.6" height="10.6" fill="#3a6ac0"/><rect x="57.2" y="30.1" width="3.6" height="6.9" fill="#3a6ac0"/><rect x="63.9" y="25.5" width="3.6" height="11.5" fill="#3a6ac0"/><rect x="70.5" y="22.0" width="3.6" height="15.0" fill="#3a6ac0"/><rect x="77.2" y="16.2" width="3.6" height="20.8" fill="#3a6ac0"/><rect x="83.9" y="11.5" width="3.6" height="25.5" fill="#3a6ac0"/><line x1="9" y1="37" x2="89" y2="37" stroke="#c0c0c0" stroke-width="0.7"/><line x1="13.3" y1="39" x2="7.3" y2="45" stroke="#c0c0c0" stroke-width="0.9"/><line x1="20.0" y1="39" x2="13.0" y2="46" stroke="#c0c0c0" stroke-width="0.9"/><line x1="26.7" y1="39" x2="21.7" y2="44" stroke="#c0c0c0" stroke-width="0.9"/><line x1="33.3" y1="39" x2="29.3" y2="43" stroke="#c0c0c0" stroke-width="0.9"/><line x1="40.0" y1="39" x2="37.0" y2="42" stroke="#c0c0c0" stroke-width="0.9"/><line x1="46.7" y1="39" x2="42.7" y2="43" stroke="#c0c0c0" stroke-width="0.9"/><line x1="53.3" y1="39" x2="50.3" y2="42" stroke="#c0c0c0" stroke-width="0.9"/><line x1="60.0" y1="39" x2="54.0" y2="45" stroke="#c0c0c0" stroke-width="0.9"/><line x1="66.7" y1="39" x2="57.7" y2="48" stroke="#c0c0c0" stroke-width="0.9"/><line x1="73.3" y1="39" x2="67.3" y2="45" stroke="#c0c0c0" stroke-width="0.9"/><line x1="80.0" y1="39" x2="71.0" y2="48" stroke="#c0c0c0" stroke-width="0.9"/><line x1="86.7" y1="39" x2="78.7" y2="47" stroke="#c0c0c0" stroke-width="0.9"/></svg>
<svg class="abs" style="left:946px;top:51px" width="93" height="51"><rect x="0.5" y="0.5" width="92" height="50" fill="#ffffff" stroke="#e2e2e2"/><rect x="40.5" y="5.0" width="12" height="2.4" fill="#a0a0a0"/><line x1="9" y1="10.0" x2="89" y2="10.0" stroke="#dcdcdc" stroke-width="0.6"/><line x1="9" y1="13.9" x2="89" y2="13.9" stroke="#dcdcdc" stroke-width="0.6"/><line x1="9" y1="17.7" x2="89" y2="17.7" stroke="#dcdcdc" stroke-width="0.6"/><line x1="9" y1="21.6" x2="89" y2="21.6" stroke="#dcdcdc" stroke-width="0.6"/><line x1="9" y1="25.4" x2="89" y2="25.4" stroke="#dcdcdc" stroke-width="0.6"/><line x1="9" y1="29.3" x2="89" y2="29.3" stroke="#dcdcdc" stroke-width="0.6"/><line x1="9" y1="33.1" x2="89" y2="33.1" stroke="#dcdcdc" stroke-width="0.6"/><line x1="9.0" y1="10" x2="9.0" y2="37" stroke="#dddddd" stroke-width="0.6"/><line x1="15.7" y1="10" x2="15.7" y2="37" stroke="#dddddd" stroke-width="0.6"/><line x1="22.3" y1="10" x2="22.3" y2="37" stroke="#dddddd" stroke-width="0.6"/><line x1="29.0" y1="10" x2="29.0" y2="37" stroke="#dddddd" stroke-width="0.6"/><line x1="35.7" y1="10" x2="35.7" y2="37" stroke="#dddddd" stroke-width="0.6"/><line x1="42.3" y1="10" x2="42.3" y2="37" stroke="#dddddd" stroke-width="0.6"/><line x1="49.0" y1="10" x2="49.0" y2="37" stroke="#dddddd" stroke-width="0.6"/><line x1="55.7" y1="10" x2="55.7" y2="37" stroke="#dddddd" stroke-width="0.6"/><line x1="62.3" y1="10" x2="62.3" y2="37" stroke="#dddddd" stroke-width="0.6"/><line x1="69.0" y1="10" x2="69.0" y2="37" stroke="#dddddd" stroke-width="0.6"/><line x1="75.7" y1="10" x2="75.7" y2="37" stroke="#dddddd" stroke-width="0.6"/><line x1="82.3" y1="10" x2="82.3" y2="37" stroke="#dddddd" stroke-width="0.6"/><line x1="89.0" y1="10" x2="89.0" y2="37" stroke="#dddddd" stroke-width="0.6"/><rect x="4" y="12.0" width="3" height="1.3" fill="#b8b8b8"/><rect x="4" y="16.5" width="3" height="1.3" fill="#b8b8b8"/><rect x="4" y="21.0" width="3" height="1.3" fill="#b8b8b8"/><rect x="4" y="25.5" width="3" height="1.3" fill="#b8b8b8"/><rect x="4" y="30.0" width="3" height="1.3" fill="#b8b8b8"/><rect x="4" y="34.5" width="3" height="1.3" fill="#b8b8b8"/><rect x="11.2" y="33.5" width="2.2" height="3.5" fill="#4a78c8"/><rect x="17.9" y="27.6" width="2.2" height="9.4" fill="#4a78c8"/><rect x="24.6" y="20.8" width="2.2" height="16.2" fill="#4a78c8"/><rect x="31.2" y="20.5" width="2.2" height="16.5" fill="#4a78c8"/><rect x="37.9" y="26.4" width="2.2" height="10.6" fill="#4a78c8"/><rect x="44.6" y="22.0" width="2.2" height="15.0" fill="#4a78c8"/><rect x="51.2" y="26.4" width="2.2" height="10.6" fill="#4a78c8"/><rect x="57.9" y="30.1" width="2.2" height="6.9" fill="#4a78c8"/><rect x="64.6" y="25.5" width="2.2" height="11.5" fill="#4a78c8"/><rect x="71.2" y="22.0" width="2.2" height="15.0" fill="#4a78c8"/><rect x="77.9" y="16.2" width="2.2" height="20.8" fill="#4a78c8"/><rect x="84.6" y="11.5" width="2.2" height="25.5" fill="#4a78c8"/><line x1="9" y1="37" x2="89" y2="37" stroke="#c0c0c0" stroke-width="0.7"/><line x1="13.3" y1="39" x2="7.3" y2="45" stroke="#c0c0c0" stroke-width="0.9"/><line x1="20.0" y1="39" x2="13.0" y2="46" stroke="#c0c0c0" stroke-width="0.9"/><line x1="26.7" y1="39" x2="21.7" y2="44" stroke="#c0c0c0" stroke-width="0.9"/><line x1="33.3" y1="39" x2="29.3" y2="43" stroke="#c0c0c0" stroke-width="0.9"/><line x1="40.0" y1="39" x2="37.0" y2="42" stroke="#c0c0c0" stroke-width="0.9"/><line x1="46.7" y1="39" x2="42.7" y2="43" stroke="#c0c0c0" stroke-width="0.9"/><line x1="53.3" y1="39" x2="50.3" y2="42" stroke="#c0c0c0" stroke-width="0.9"/><line x1="60.0" y1="39" x2="54.0" y2="45" stroke="#c0c0c0" stroke-width="0.9"/><line x1="66.7" y1="39" x2="57.7" y2="48" stroke="#c0c0c0" stroke-width="0.9"/><line x1="73.3" y1="39" x2="67.3" y2="45" stroke="#c0c0c0" stroke-width="0.9"/><line x1="80.0" y1="39" x2="71.0" y2="48" stroke="#c0c0c0" stroke-width="0.9"/><line x1="86.7" y1="39" x2="78.7" y2="47" stroke="#c0c0c0" stroke-width="0.9"/></svg>
<div class="abs" style="left:0;top:158px;width:1643px;height:43px;background:#e6e6e6"></div>
<div class="abs" style="left:7px;top:163px;width:117px;height:28px;background:#fbfbfa;border:1px solid #d4d4d4"></div>
<div class="abs" style="left:11px;top:169px;font-size:15px;color:#333;line-height:18px">Chart 1</div>
<svg class="abs" style="left:111px;top:175px" width="10" height="6"><path d="M1 1 H7 L4 4Z" fill="#666"/></svg>
<svg class="abs" style="left:138px;top:168px" width="6" height="18"><circle cx="3" cy="4" r="1" fill="#999"/><circle cx="3" cy="9" r="1" fill="#999"/><circle cx="3" cy="14" r="1" fill="#999"/></svg>
<div class="abs" style="left:158px;top:163px;width:129px;height:28px;background:#fbfbfa;border:1px solid #d4d4d4"></div>
<svg class="abs" style="left:158px;top:163px" width="129" height="28"><path d="M16 8 L27 19 M27 8 L16 19" stroke="#a6a6a6" stroke-width="1.4"/><path d="M58.5 14 L62 18.5 L70 9" fill="none" stroke="#bdbdbd" stroke-width="2"/></svg>
<div class="abs" style="left:257px;top:166px;font-family:'Liberation Serif',serif;font-style:italic;font-size:17px;color:#444;line-height:20px">fx</div>
<div class="abs" style="left:290px;top:163px;width:1360px;height:28px;background:#fbfbfa;border:1px solid #d4d4d4"></div>
<div class="abs" style="left:0;top:201px;width:1643px;height:38px;background:#e6e6e6"></div>
<div class="abs" style="left:0;top:239px;width:52px;height:685px;background:#e6e6e6"></div>
<div class="abs" style="left:0;top:0;width:1px;height:924px;background:#2a2a2a"></div>
<svg class="abs" style="left:0;top:0" width="1643" height="924"><line x1="52" y1="275.5" x2="1643" y2="275.5" stroke="#e0e0e0" stroke-width="1"/><line x1="0" y1="275.5" x2="52" y2="275.5" stroke="#cfcfcf" stroke-width="1"/><line x1="52" y1="311.5" x2="1643" y2="311.5" stroke="#e0e0e0" stroke-width="1"/><line x1="0" y1="311.5" x2="52" y2="311.5" stroke="#cfcfcf" stroke-width="1"/><line x1="52" y1="347.5" x2="1643" y2="347.5" stroke="#e0e0e0" stroke-width="1"/><line x1="0" y1="347.5" x2="52" y2="347.5" stroke="#cfcfcf" stroke-width="1"/><line x1="52" y1="383.5" x2="1643" y2="383.5" stroke="#e0e0e0" stroke-width="1"/><line x1="0" y1="383.5" x2="52" y2="383.5" stroke="#cfcfcf" stroke-width="1"/><line x1="52" y1="419.5" x2="1643" y2="419.5" stroke="#e0e0e0" stroke-width="1"/><line x1="0" y1="419.5" x2="52" y2="419.5" stroke="#cfcfcf" stroke-width="1"/><line x1="52" y1="455.5" x2="1643" y2="455.5" stroke="#e0e0e0" stroke-width="1"/><line x1="0" y1="455.5" x2="52" y2="455.5" stroke="#cfcfcf" stroke-width="1"/><line x1="52" y1="491.5" x2="1643" y2="491.5" stroke="#e0e0e0" stroke-width="1"/><line x1="0" y1="491.5" x2="52" y2="491.5" stroke="#cfcfcf" stroke-width="1"/><line x1="52" y1="527.5" x2="1643" y2="527.5" stroke="#e0e0e0" stroke-width="1"/><line x1="0" y1="527.5" x2="52" y2="527.5" stroke="#cfcfcf" stroke-width="1"/><line x1="52" y1="563.5" x2="1643" y2="563.5" stroke="#e0e0e0" stroke-width="1"/><line x1="0" y1="563.5" x2="52" y2="563.5" stroke="#cfcfcf" stroke-width="1"/><line x1="52" y1="599.5" x2="1643" y2="599.5" stroke="#e0e0e0" stroke-width="1"/><line x1="0" y1="599.5" x2="52" y2="599.5" stroke="#cfcfcf" stroke-width="1"/><line x1="52" y1="635.5" x2="1643" y2="635.5" stroke="#e0e0e0" stroke-width="1"/><line x1="0" y1="635.5" x2="52" y2="635.5" stroke="#cfcfcf" stroke-width="1"/><line x1="52" y1="671.5" x2="1643" y2="671.5" stroke="#e0e0e0" stroke-width="1"/><line x1="0" y1="671.5" x2="52" y2="671.5" stroke="#cfcfcf" stroke-width="1"/><line x1="52" y1="707.5" x2="1643" y2="707.5" stroke="#e0e0e0" stroke-width="1"/><line x1="0" y1="707.5" x2="52" y2="707.5" stroke="#cfcfcf" stroke-width="1"/><line x1="52" y1="743.5" x2="1643" y2="743.5" stroke="#e0e0e0" stroke-width="1"/><line x1="0" y1="743.5" x2="52" y2="743.5" stroke="#cfcfcf" stroke-width="1"/><line x1="52" y1="779.5" x2="1643" y2="779.5" stroke="#e0e0e0" stroke-width="1"/><line x1="0" y1="779.5" x2="52" y2="779.5" stroke="#cfcfcf" stroke-width="1"/><line x1="52" y1="815.5" x2="1643" y2="815.5" stroke="#e0e0e0" stroke-width="1"/><line x1="0" y1="815.5" x2="52" y2="815.5" stroke="#cfcfcf" stroke-width="1"/><line x1="52" y1="851.5" x2="1643" y2="851.5" stroke="#e0e0e0" stroke-width="1"/><line x1="0" y1="851.5" x2="52" y2="851.5" stroke="#cfcfcf" stroke-width="1"/><line x1="52" y1="887.5" x2="1643" y2="887.5" stroke="#e0e0e0" stroke-width="1"/><line x1="0" y1="887.5" x2="52" y2="887.5" stroke="#cfcfcf" stroke-width="1"/><line x1="52" y1="923.5" x2="1643" y2="923.5" stroke="#e0e0e0" stroke-width="1"/><line x1="0" y1="923.5" x2="52" y2="923.5" stroke="#cfcfcf" stroke-width="1"/><line x1="179.5" y1="239" x2="179.5" y2="924" stroke="#e0e0e0" stroke-width="1"/><line x1="179.5" y1="201" x2="179.5" y2="239" stroke="#c4c4c4" stroke-width="1"/><line x1="348.5" y1="239" x2="348.5" y2="924" stroke="#e0e0e0" stroke-width="1"/><line x1="348.5" y1="201" x2="348.5" y2="239" stroke="#c4c4c4" stroke-width="1"/><line x1="475.5" y1="239" x2="475.5" y2="924" stroke="#e0e0e0" stroke-width="1"/><line x1="475.5" y1="201" x2="475.5" y2="239" stroke="#c4c4c4" stroke-width="1"/><line x1="602.5" y1="239" x2="602.5" y2="924" stroke="#e0e0e0" stroke-width="1"/><line x1="602.5" y1="201" x2="602.5" y2="239" stroke="#c4c4c4" stroke-width="1"/><line x1="728.5" y1="239" x2="728.5" y2="924" stroke="#e0e0e0" stroke-width="1"/><line x1="728.5" y1="201" x2="728.5" y2="239" stroke="#c4c4c4" stroke-width="1"/><line x1="855.5" y1="239" x2="855.5" y2="924" stroke="#e0e0e0" stroke-width="1"/><line x1="855.5" y1="201" x2="855.5" y2="239" stroke="#c4c4c4" stroke-width="1"/><line x1="982.5" y1="239" x2="982.5" y2="924" stroke="#e0e0e0" stroke-width="1"/><line x1="982.5" y1="201" x2="982.5" y2="239" stroke="#c4c4c4" stroke-width="1"/><line x1="1108.5" y1="239" x2="1108.5" y2="924" stroke="#e0e0e0" stroke-width="1"/><line x1="1108.5" y1="201" x2="1108.5" y2="239" stroke="#c4c4c4" stroke-width="1"/><line x1="1236.5" y1="239" x2="1236.5" y2="924" stroke="#e0e0e0" stroke-width="1"/><line x1="1236.5" y1="201" x2="1236.5" y2="239" stroke="#c4c4c4" stroke-width="1"/><line x1="1362.5" y1="239" x2="1362.5" y2="924" stroke="#e0e0e0" stroke-width="1"/><line x1="1362.5" y1="201" x2="1362.5" y2="239" stroke="#c4c4c4" stroke-width="1"/><line x1="1489.5" y1="239" x2="1489.5" y2="924" stroke="#e0e0e0" stroke-width="1"/><line x1="1489.5" y1="201" x2="1489.5" y2="239" stroke="#c4c4c4" stroke-width="1"/><line x1="1616.5" y1="239" x2="1616.5" y2="924" stroke="#e0e0e0" stroke-width="1"/><line x1="1616.5" y1="201" x2="1616.5" y2="239" stroke="#c4c4c4" stroke-width="1"/><line x1="0" y1="238.5" x2="1643" y2="238.5" stroke="#c4c4c4" stroke-width="1.5"/><line x1="52.5" y1="201" x2="52.5" y2="924" stroke="#c8c8c8" stroke-width="1.2"/><path d="M18 237 L50 205 L50 237 Z" fill="#bababa"/></svg>
<div class="ch" style="left:52px;width:127px">A</div>
<div class="ch" style="left:179px;width:169px">B</div>
<div class="ch" style="left:348px;width:127px">C</div>
<div class="ch" style="left:475px;width:127px">D</div>
<div class="ch" style="left:602px;width:126px">E</div>
<div class="ch" style="left:728px;width:127px">F</div>
<div class="ch" style="left:855px;width:127px">G</div>
<div class="ch" style="left:982px;width:126px">H</div>
<div class="ch" style="left:1108px;width:128px">I</div>
<div class="ch" style="left:1236px;width:126px">J</div>
<div class="ch" style="left:1362px;width:127px">K</div>
<div class="ch" style="left:1489px;width:127px">L</div>
<div class="rh" style="top:239px">1</div>
<div class="rh" style="top:275px">2</div>
<div class="rh" style="top:311px">3</div>
<div class="rh" style="top:347px">4</div>
<div class="rh" style="top:383px">5</div>
<div class="rh" style="top:419px">6</div>
<div class="rh" style="top:455px">7</div>
<div class="rh" style="top:491px">8</div>
<div class="rh" style="top:527px">9</div>
<div class="rh" style="top:563px">10</div>
<div class="rh" style="top:599px">11</div>
<div class="rh" style="top:635px">12</div>
<div class="rh" style="top:671px">13</div>
<div class="rh" style="top:707px">14</div>
<div class="rh" style="top:743px">15</div>
<div class="rh" style="top:779px">16</div>
<div class="rh" style="top:815px">17</div>
<div class="rh" style="top:851px">18</div>
<div class="rh" style="top:887px">19</div>
<div class="abs" style="left:179px;top:275px;width:169px;height:36px;background:#1a5fc0"></div>
<div class="abs" style="left:348px;top:275px;width:254px;height:36px;background:#2f5ab4"></div>
<div class="abs" style="left:179px;top:311px;width:169px;height:432px;background:#ede9f3"></div>
<div class="abs" style="left:348px;top:311px;width:254px;height:432px;background:#e7eaf6"></div>
<svg class="abs" style="left:0;top:0" width="1643" height="924"><line x1="179" y1="348" x2="602" y2="348" stroke="#707070" stroke-width="2"/><line x1="179" y1="384" x2="602" y2="384" stroke="#707070" stroke-width="2"/><line x1="179" y1="420" x2="602" y2="420" stroke="#707070" stroke-width="2"/><line x1="179" y1="456" x2="602" y2="456" stroke="#707070" stroke-width="2"/><line x1="179" y1="492" x2="602" y2="492" stroke="#707070" stroke-width="2"/><line x1="179" y1="528" x2="602" y2="528" stroke="#707070" stroke-width="2"/><line x1="179" y1="564" x2="602" y2="564" stroke="#707070" stroke-width="2"/><line x1="179" y1="600" x2="602" y2="600" stroke="#707070" stroke-width="2"/><line x1="179" y1="636" x2="602" y2="636" stroke="#707070" stroke-width="2"/><line x1="179" y1="672" x2="602" y2="672" stroke="#707070" stroke-width="2"/><line x1="179" y1="708" x2="602" y2="708" stroke="#707070" stroke-width="2"/><line x1="179.6" y1="311" x2="179.6" y2="743" stroke="#8a70b8" stroke-width="1.5"/><line x1="348" y1="275" x2="348" y2="743" stroke="#4a7cc8" stroke-width="2"/><rect x="345.8" y="275" width="3.4" height="36" fill="#f4eeee"/><line x1="347.5" y1="275" x2="347.5" y2="311" stroke="#4a3434" stroke-width="1.6"/><line x1="474.5" y1="275" x2="474.5" y2="743" stroke="#4a4a4a" stroke-width="1.3"/><line x1="601.5" y1="311" x2="601.5" y2="743" stroke="#5b8bd0" stroke-width="2"/><line x1="179" y1="743" x2="348" y2="743" stroke="#a07cc4" stroke-width="2"/><line x1="348" y1="743" x2="602" y2="743" stroke="#4a7cc8" stroke-width="2"/><path d="M348 275.2 H601.6 V311.4 H348" fill="none" stroke="#cf7f80" stroke-width="2.2"/><rect x="346.4" y="273.4" width="3.2" height="3.2" fill="#7a3a3a"/><rect x="600.4" y="273.4" width="3.2" height="3.2" fill="#7a3a3a"/><rect x="346.4" y="309.4" width="3.2" height="3.2" fill="#7a3a3a"/><rect x="600.4" y="309.4" width="3.2" height="3.2" fill="#7a3a3a"/><rect x="178.4" y="309.4" width="3.2" height="3.2" fill="#6a5aa0"/><rect x="178.4" y="741.4" width="3.2" height="3.2" fill="#6a5aa0"/><rect x="346.4" y="741.4" width="3.2" height="3.2" fill="#2a5cb0"/><rect x="600.4" y="741.4" width="3.2" height="3.2" fill="#2a5cb0"/></svg>
<div class="cell" style="left:179px;top:275px;width:169px;text-align:center;color:#fff;font-size:25px">Month</div>
<div class="cell" style="left:348px;top:275px;width:127px;text-align:center;color:#f6eeee;font-size:25px">Sales</div>
<div class="cell" style="left:475px;top:275px;width:127px;text-align:center;color:#f6eeee;font-size:25px">Target</div>
<div class="cell" style="left:179px;top:311px;width:169px;text-align:center;font-size:24px">January</div>
<div class="cell" style="left:348px;top:311px;width:123.3px;text-align:right;font-size:25.5px;letter-spacing:1.3px">21</div>
<div class="cell" style="left:475px;top:311px;width:123.3px;text-align:right;font-size:25.5px;letter-spacing:1.3px">60</div>
<div class="cell" style="left:179px;top:347px;width:169px;text-align:center;font-size:24px">February</div>
<div class="cell" style="left:348px;top:347px;width:123.3px;text-align:right;font-size:25.5px;letter-spacing:1.3px">56</div>
<div class="cell" style="left:475px;top:347px;width:123.3px;text-align:right;font-size:25.5px;letter-spacing:1.3px">60</div>
<div class="cell" style="left:179px;top:383px;width:169px;text-align:center;font-size:24px">March</div>
<div class="cell" style="left:348px;top:383px;width:123.3px;text-align:right;font-size:25.5px;letter-spacing:1.3px">96</div>
<div class="cell" style="left:475px;top:383px;width:123.3px;text-align:right;font-size:25.5px;letter-spacing:1.3px">60</div>
<div class="cell" style="left:179px;top:419px;width:169px;text-align:center;font-size:24px">April</div>
<div class="cell" style="left:348px;top:419px;width:123.3px;text-align:right;font-size:25.5px;letter-spacing:1.3px">98</div>
<div class="cell" style="left:475px;top:419px;width:123.3px;text-align:right;font-size:25.5px;letter-spacing:1.3px">60</div>
<div class="cell" style="left:179px;top:455px;width:169px;text-align:center;font-size:24px">May</div>
<div class="cell" style="left:348px;top:455px;width:123.3px;text-align:right;font-size:25.5px;letter-spacing:1.3px">63</div>
<div class="cell" style="left:475px;top:455px;width:123.3px;text-align:right;font-size:25.5px;letter-spacing:1.3px">60</div>
<div class="cell" style="left:179px;top:491px;width:169px;text-align:center;font-size:24px">June</div>
<div class="cell" style="left:348px;top:491px;width:123.3px;text-align:right;font-size:25.5px;letter-spacing:1.3px">89</div>
<div class="cell" style="left:475px;top:491px;width:123.3px;text-align:right;font-size:25.5px;letter-spacing:1.3px">60</div>
<div class="cell" style="left:179px;top:527px;width:169px;text-align:center;font-size:24px">July</div>
<div class="cell" style="left:348px;top:527px;width:123.3px;text-align:right;font-size:25.5px;letter-spacing:1.3px">63</div>
<div class="cell" style="left:475px;top:527px;width:123.3px;text-align:right;font-size:25.5px;letter-spacing:1.3px">60</div>
<div class="cell" style="left:179px;top:563px;width:169px;text-align:center;font-size:24px">August</div>
<div class="cell" style="left:348px;top:563px;width:123.3px;text-align:right;font-size:25.5px;letter-spacing:1.3px">41</div>
<div class="cell" style="left:475px;top:563px;width:123.3px;text-align:right;font-size:25.5px;letter-spacing:1.3px">60</div>
<div class="cell" style="left:179px;top:599px;width:169px;text-align:center;font-size:24px">September</div>
<div class="cell" style="left:348px;top:599px;width:123.3px;text-align:right;font-size:25.5px;letter-spacing:1.3px">68</div>
<div class="cell" style="left:475px;top:599px;width:123.3px;text-align:right;font-size:25.5px;letter-spacing:1.3px">60</div>
<div class="cell" style="left:179px;top:635px;width:169px;text-align:center;font-size:24px">October</div>
<div class="cell" style="left:348px;top:635px;width:123.3px;text-align:right;font-size:25.5px;letter-spacing:1.3px">89</div>
<div class="cell" style="left:475px;top:635px;width:123.3px;text-align:right;font-size:25.5px;letter-spacing:1.3px">60</div>
<div class="cell" style="left:179px;top:671px;width:169px;text-align:center;font-size:24px">November</div>
<div class="cell" style="left:348px;top:671px;width:123.3px;text-align:right;font-size:25.5px;letter-spacing:1.3px">123</div>
<div class="cell" style="left:475px;top:671px;width:123.3px;text-align:right;font-size:25.5px;letter-spacing:1.3px">60</div>
<div class="cell" style="left:179px;top:707px;width:169px;text-align:center;font-size:24px">December</div>
<div class="cell" style="left:348px;top:707px;width:123.3px;text-align:right;font-size:25.5px;letter-spacing:1.3px">151</div>
<div class="cell" style="left:475px;top:707px;width:123.3px;text-align:right;font-size:25.5px;letter-spacing:1.3px">60</div>
<svg class="abs" style="left:0;top:0" width="1643" height="924"><rect x="728" y="274.5" width="888" height="469" fill="#fdfdfc" stroke="#8c8c8c" stroke-width="1.6"/><line x1="803" y1="575.1" x2="1587" y2="575.1" stroke="#d9d9d9" stroke-width="1.5"/><line x1="803" y1="536.2" x2="1587" y2="536.2" stroke="#d9d9d9" stroke-width="1.5"/><line x1="803" y1="497.4" x2="1587" y2="497.4" stroke="#d9d9d9" stroke-width="1.5"/><line x1="803" y1="458.5" x2="1587" y2="458.5" stroke="#d9d9d9" stroke-width="1.5"/><line x1="803" y1="419.6" x2="1587" y2="419.6" stroke="#d9d9d9" stroke-width="1.5"/><line x1="803" y1="380.8" x2="1587" y2="380.8" stroke="#d9d9d9" stroke-width="1.5"/><line x1="803" y1="341.9" x2="1587" y2="341.9" stroke="#d9d9d9" stroke-width="1.5"/><rect x="819.4" y="573.2" width="14.6" height="40.8" fill="#4472c4"/><rect x="838.0" y="497.4" width="14.2" height="116.6" fill="#ed7d31"/><rect x="884.7" y="505.1" width="14.6" height="108.8" fill="#4472c4"/><rect x="903.3" y="497.4" width="14.2" height="116.6" fill="#ed7d31"/><rect x="950.0" y="427.4" width="14.6" height="186.6" fill="#4472c4"/><rect x="968.6" y="497.4" width="14.2" height="116.6" fill="#ed7d31"/><rect x="1015.4" y="423.5" width="14.6" height="190.5" fill="#4472c4"/><rect x="1034.0" y="497.4" width="14.2" height="116.6" fill="#ed7d31"/><rect x="1080.7" y="491.5" width="14.6" height="122.5" fill="#4472c4"/><rect x="1099.3" y="497.4" width="14.2" height="116.6" fill="#ed7d31"/><rect x="1146.0" y="441.0" width="14.6" height="173.0" fill="#4472c4"/><rect x="1164.6" y="497.4" width="14.2" height="116.6" fill="#ed7d31"/><rect x="1211.4" y="491.5" width="14.6" height="122.5" fill="#4472c4"/><rect x="1230.0" y="497.4" width="14.2" height="116.6" fill="#ed7d31"/><rect x="1276.7" y="534.3" width="14.6" height="79.7" fill="#4472c4"/><rect x="1295.3" y="497.4" width="14.2" height="116.6" fill="#ed7d31"/><rect x="1342.0" y="481.8" width="14.6" height="132.2" fill="#4472c4"/><rect x="1360.6" y="497.4" width="14.2" height="116.6" fill="#ed7d31"/><rect x="1407.4" y="441.0" width="14.6" height="173.0" fill="#4472c4"/><rect x="1426.0" y="497.4" width="14.2" height="116.6" fill="#ed7d31"/><rect x="1472.7" y="374.9" width="14.6" height="239.1" fill="#4472c4"/><rect x="1491.3" y="497.4" width="14.2" height="116.6" fill="#ed7d31"/><rect x="1538.0" y="320.5" width="14.6" height="293.5" fill="#4472c4"/><rect x="1556.6" y="497.4" width="14.2" height="116.6" fill="#ed7d31"/><rect x="803" y="303" width="784" height="311" fill="none" stroke="#8a8a8a" stroke-width="1.6"/><line x1="803" y1="614" x2="1587" y2="614" stroke="#9a9a9a" stroke-width="2"/><text x="781" y="620.8" text-anchor="end" font-family="Liberation Sans" font-size="21" fill="#595959">0</text><text x="781" y="581.9" text-anchor="end" font-family="Liberation Sans" font-size="21" fill="#595959">20</text><text x="781" y="543.0" text-anchor="end" font-family="Liberation Sans" font-size="21" fill="#595959">40</text><text x="781" y="504.2" text-anchor="end" font-family="Liberation Sans" font-size="21" fill="#595959">60</text><text x="781" y="465.3" text-anchor="end" font-family="Liberation Sans" font-size="21" fill="#595959">80</text><text x="781" y="426.4" text-anchor="end" font-family="Liberation Sans" font-size="21" fill="#595959">100</text><text x="781" y="387.6" text-anchor="end" font-family="Liberation Sans" font-size="21" fill="#595959">120</text><text x="781" y="348.7" text-anchor="end" font-family="Liberation Sans" font-size="21" fill="#595959">140</text><text x="781" y="309.8" text-anchor="end" font-family="Liberation Sans" font-size="21" fill="#595959">160</text><text transform="translate(842.7,645) rotate(-45)" text-anchor="end" font-family="Liberation Sans" font-size="21.5" fill="#595959">January</text><text transform="translate(908.0,645) rotate(-45)" text-anchor="end" font-family="Liberation Sans" font-size="21.5" fill="#595959">February</text><text transform="translate(973.3,645) rotate(-45)" text-anchor="end" font-family="Liberation Sans" font-size="21.5" fill="#595959">March</text><text transform="translate(1038.7,645) rotate(-45)" text-anchor="end" font-family="Liberation Sans" font-size="21.5" fill="#595959">April</text><text transform="translate(1104.0,645) rotate(-45)" text-anchor="end" font-family="Liberation Sans" font-size="21.5" fill="#595959">May</text><text transform="translate(1169.3,645) rotate(-45)" text-anchor="end" font-family="Liberation Sans" font-size="21.5" fill="#595959">June</text><text transform="translate(1234.7,645) rotate(-45)" text-anchor="end" font-family="Liberation Sans" font-size="21.5" fill="#595959">July</text><text transform="translate(1300.0,645) rotate(-45)" text-anchor="end" font-family="Liberation Sans" font-size="21.5" fill="#595959">August</text><text transform="translate(1365.3,645) rotate(-45)" text-anchor="end" font-family="Liberation Sans" font-size="21.5" fill="#595959">September</text><text transform="translate(1430.7,645) rotate(-45)" text-anchor="end" font-family="Liberation Sans" font-size="21.5" fill="#595959">October</text><text transform="translate(1496.0,645) rotate(-45)" text-anchor="end" font-family="Liberation Sans" font-size="21.5" fill="#595959">November</text><text transform="translate(1561.3,645) rotate(-45)" text-anchor="end" font-family="Liberation Sans" font-size="21.5" fill="#595959">December</text><circle cx="728" cy="274.5" r="5" fill="#fdfdfc" stroke="#8c8c8c" stroke-width="1.8"/><circle cx="1172" cy="274.5" r="5" fill="#fdfdfc" stroke="#8c8c8c" stroke-width="1.8"/><circle cx="1616" cy="274.5" r="5" fill="#fdfdfc" stroke="#8c8c8c" stroke-width="1.8"/><circle cx="728" cy="509" r="5" fill="#fdfdfc" stroke="#8c8c8c" stroke-width="1.8"/><circle cx="1616" cy="509" r="5" fill="#fdfdfc" stroke="#8c8c8c" stroke-width="1.8"/><circle cx="728" cy="743.5" r="5" fill="#fdfdfc" stroke="#8c8c8c" stroke-width="1.8"/><circle cx="1172" cy="743.5" r="5" fill="#fdfdfc" stroke="#8c8c8c" stroke-width="1.8"/><circle cx="1616" cy="743.5" r="5" fill="#fdfdfc" stroke="#8c8c8c" stroke-width="1.8"/><circle cx="803" cy="303" r="5" fill="#fdfdfc" stroke="#8c8c8c" stroke-width="1.8"/><circle cx="1195" cy="303" r="5" fill="#fdfdfc" stroke="#8c8c8c" stroke-width="1.8"/><circle cx="1587" cy="303" r="5" fill="#fdfdfc" stroke="#8c8c8c" stroke-width="1.8"/><circle cx="803" cy="458.5" r="5" fill="#fdfdfc" stroke="#8c8c8c" stroke-width="1.8"/><circle cx="1587" cy="458.5" r="5" fill="#fdfdfc" stroke="#8c8c8c" stroke-width="1.8"/><circle cx="803" cy="614" r="5" fill="#fdfdfc" stroke="#8c8c8c" stroke-width="1.8"/><circle cx="1195" cy="614" r="5" fill="#fdfdfc" stroke="#8c8c8c" stroke-width="1.8"/><circle cx="1587" cy="614" r="5" fill="#fdfdfc" stroke="#8c8c8c" stroke-width="1.8"/><rect x="1630" y="275" width="20" height="31" fill="#fdfdfd" stroke="#c6c6c6" stroke-width="1.2"/><rect x="1630" y="319" width="20" height="31" fill="#fdfdfd" stroke="#c6c6c6" stroke-width="1.2"/><rect x="1630" y="363" width="20" height="31" fill="#fdfdfd" stroke="#c6c6c6" stroke-width="1.2"/><line x1="1634" y1="291" x2="1643" y2="291" stroke="#4aa070" stroke-width="1.2"/><path d="M1633 340.5 Q1637 335 1643 332 V340 Q1638 342.5 1633 340.5 Z" fill="#4a8ad8" stroke="#2a6cc0" stroke-width="0.8"/><path d="M1633 371 H1643 M1633 371 L1640 380 V392" fill="none" stroke="#333" stroke-width="1.4"/><path d="M563 737 L572 746 M563 737 V741 M563 737 H567 M572 746 V742 M572 746 H568" stroke="#222" stroke-width="1.2" fill="none"/><polygon points="615.8,754.8 708.8,761.4 693.7,783.3 813.5,869.2 786.7,906.2 666.5,820.5 651.1,840.5" fill="#1849b4"/></svg>
</body></html>
